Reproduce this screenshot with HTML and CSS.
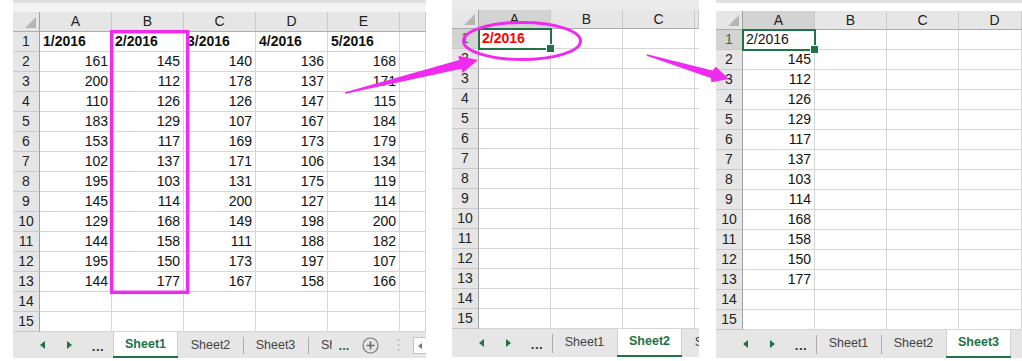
FILE: index.html
```html
<!DOCTYPE html>
<html lang="en">
<head>
<meta charset="UTF-8">
<title>Sheet copy</title>
<link rel="stylesheet" href="styles.css">
</head>
<body>

<section class="sheet sheet-one">
    <div class="sheet-top"></div>
    <div class="row head"><span class="corner"></span><span>A</span><span>B</span><span>C</span><span>D</span><span>E</span><span></span></div>
    <div class="row"><span class="rh">1</span><span class="t b">1/2016</span><span class="t b">2/2016</span><span class="t b">3/2016</span><span class="t b">4/2016</span><span class="t b">5/2016</span><span></span></div>
    <div class="row"><span class="rh">2</span><span>161</span><span>145</span><span>140</span><span>136</span><span>168</span><span></span></div>
    <div class="row"><span class="rh">3</span><span>200</span><span>112</span><span>178</span><span>137</span><span>171</span><span></span></div>
    <div class="row"><span class="rh">4</span><span>110</span><span>126</span><span>126</span><span>147</span><span>115</span><span></span></div>
    <div class="row"><span class="rh">5</span><span>183</span><span>129</span><span>107</span><span>167</span><span>184</span><span></span></div>
    <div class="row"><span class="rh">6</span><span>153</span><span>117</span><span>169</span><span>173</span><span>179</span><span></span></div>
    <div class="row"><span class="rh">7</span><span>102</span><span>137</span><span>171</span><span>106</span><span>134</span><span></span></div>
    <div class="row"><span class="rh">8</span><span>195</span><span>103</span><span>131</span><span>175</span><span>119</span><span></span></div>
    <div class="row"><span class="rh">9</span><span>145</span><span>114</span><span>200</span><span>127</span><span>114</span><span></span></div>
    <div class="row"><span class="rh">10</span><span>129</span><span>168</span><span>149</span><span>198</span><span>200</span><span></span></div>
    <div class="row"><span class="rh">11</span><span>144</span><span>158</span><span>111</span><span>188</span><span>182</span><span></span></div>
    <div class="row"><span class="rh">12</span><span>195</span><span>150</span><span>173</span><span>197</span><span>107</span><span></span></div>
    <div class="row"><span class="rh">13</span><span>144</span><span>177</span><span>167</span><span>158</span><span>166</span><span></span></div>
    <div class="row"><span class="rh">14</span><span></span><span></span><span></span><span></span><span></span><span></span></div>
    <div class="row"><span class="rh">15</span><span></span><span></span><span></span><span></span><span></span><span></span></div>
    <div class="tabs">
        <div class="tab-nav"><span></span><span class="arr left"></span><span class="arr right"></span><span class="dots">...</span></div>
        <div class="tab on">Sheet1</div>
        <div class="tab">Sheet2</div>
        <div class="tab">Sheet3</div>
        <div class="tab cut">Sheet4</div>
        <div class="more">...</div>
        <div class="add">
            <svg width="17" height="17" viewBox="0 0 17 17"><circle cx="8.5" cy="8.5" r="7.5" fill="none" stroke="#7a7a7a" stroke-width="1.2"/><path d="M8.5 4.5v8M4.5 8.5h8" stroke="#6a6a6a" stroke-width="1.6"/></svg>
        </div>
        <div class="vdots">
            <svg width="3" height="14" viewBox="0 0 3 14"><circle cx="1.5" cy="2" r="1" fill="#b5b5b5"/><circle cx="1.5" cy="7" r="1" fill="#b5b5b5"/><circle cx="1.5" cy="12" r="1" fill="#b5b5b5"/></svg>
        </div>
        <div class="hscroll"><span class="arr back"></span></div>
    </div>
</section>

<section class="sheet sheet-two">
    <div class="sheet-top"></div>
    <div class="row head"><span class="corner"></span><span class="on">A</span><span>B</span><span>C</span><span></span></div>
    <div class="row"><span class="rh on">1</span><span class="t sel red">2/2016</span><span></span><span></span><span></span></div>
    <div class="row"><span class="rh">2</span><span></span><span></span><span></span><span></span></div>
    <div class="row"><span class="rh">3</span><span></span><span></span><span></span><span></span></div>
    <div class="row"><span class="rh">4</span><span></span><span></span><span></span><span></span></div>
    <div class="row"><span class="rh">5</span><span></span><span></span><span></span><span></span></div>
    <div class="row"><span class="rh">6</span><span></span><span></span><span></span><span></span></div>
    <div class="row"><span class="rh">7</span><span></span><span></span><span></span><span></span></div>
    <div class="row"><span class="rh">8</span><span></span><span></span><span></span><span></span></div>
    <div class="row"><span class="rh">9</span><span></span><span></span><span></span><span></span></div>
    <div class="row"><span class="rh">10</span><span></span><span></span><span></span><span></span></div>
    <div class="row"><span class="rh">11</span><span></span><span></span><span></span><span></span></div>
    <div class="row"><span class="rh">12</span><span></span><span></span><span></span><span></span></div>
    <div class="row"><span class="rh">13</span><span></span><span></span><span></span><span></span></div>
    <div class="row"><span class="rh">14</span><span></span><span></span><span></span><span></span></div>
    <div class="row"><span class="rh">15</span><span></span><span></span><span></span><span></span></div>
    <div class="tabs">
        <div class="tab-nav"><span></span><span class="arr left"></span><span class="arr right"></span><span class="dots">...</span></div>
        <div class="tab">Sheet1</div>
        <div class="tab on">Sheet2</div>
        <div class="tab">Sheet3</div>
    </div>
</section>

<section class="sheet sheet-three">
    <div class="sheet-top"></div>
    <div class="row head"><span class="corner"></span><span class="on">A</span><span>B</span><span>C</span><span class="last">D</span></div>
    <div class="row"><span class="rh on">1</span><span class="t sel">2/2016</span><span></span><span></span><span></span></div>
    <div class="row"><span class="rh">2</span><span>145</span><span></span><span></span><span></span></div>
    <div class="row"><span class="rh">3</span><span>112</span><span></span><span></span><span></span></div>
    <div class="row"><span class="rh">4</span><span>126</span><span></span><span></span><span></span></div>
    <div class="row"><span class="rh">5</span><span>129</span><span></span><span></span><span></span></div>
    <div class="row"><span class="rh">6</span><span>117</span><span></span><span></span><span></span></div>
    <div class="row"><span class="rh">7</span><span>137</span><span></span><span></span><span></span></div>
    <div class="row"><span class="rh">8</span><span>103</span><span></span><span></span><span></span></div>
    <div class="row"><span class="rh">9</span><span>114</span><span></span><span></span><span></span></div>
    <div class="row"><span class="rh">10</span><span>168</span><span></span><span></span><span></span></div>
    <div class="row"><span class="rh">11</span><span>158</span><span></span><span></span><span></span></div>
    <div class="row"><span class="rh">12</span><span>150</span><span></span><span></span><span></span></div>
    <div class="row"><span class="rh">13</span><span>177</span><span></span><span></span><span></span></div>
    <div class="row"><span class="rh">14</span><span></span><span></span><span></span><span></span></div>
    <div class="row"><span class="rh">15</span><span></span><span></span><span></span><span></span></div>
    <div class="tabs">
        <div class="tab-nav"><span></span><span class="arr left"></span><span class="arr right"></span><span class="dots">...</span></div>
        <div class="tab">Sheet1</div>
        <div class="tab">Sheet2</div>
        <div class="tab on">Sheet3</div>
    </div>
</section>

<!-- magenta marks drawn over the screenshots -->
<svg class="marks" width="1022" height="361" viewBox="0 0 1022 361">
    <rect x="111.7" y="31.7" width="76" height="260.6" fill="none" stroke="#ef2bef" stroke-width="3.5"/>
    <ellipse cx="522" cy="41" rx="58.5" ry="18.5" fill="none" stroke="#ef2bef" stroke-width="3"/>
    <polygon points="345,92.3 459.4,60 458.3,55.7 478,60 462.7,73.1 461.6,68.8 345.5,93.7" fill="#ef2bef"/>
    <polygon points="647,54.3 712.6,70.6 716,66.8 729,79 711.4,82.2 710.8,78 646.8,55.7" fill="#ef2bef"/>
</svg>

</body>
</html>
```

FILE: styles.css
```css
* {
    box-sizing: border-box;
}

body {
    margin: 0;
    width: 1022px;
    height: 361px;
    overflow: hidden;
    position: relative;
    background-color: #fff;
    display: flex;
    align-items: flex-start;
    font-family: "Liberation Sans", Arial, sans-serif;
    color: #111;
}

.sheet {
    flex: none;
    overflow: hidden;
}

.sheet-one {
    width: 413px;
    margin-left: 13px;
}

.sheet-two {
    width: 247px;
    margin-left: 26px;
}

.sheet-three {
    width: 306px;
    margin-left: 17px;
}

.sheet-top {
    height: 12px;
    background-color: #f3f3f3;
    border-top: 3px solid #e0e0e0;
}

.sheet-two .sheet-top {
    height: 10px;
    background-color: #ebebeb;
    border-top: none;
}

.sheet-three .sheet-top {
    height: 11px;
    background-color: #fff;
}

/* grid rows */
.row {
    display: grid;
    height: 20px;
}

.sheet-one .row {
    grid-template-columns: 27px repeat(5, 72px) 26px;
}

.sheet-two .row {
    grid-template-columns: 27px repeat(3, 72px) 4px;
}

.sheet-three .row {
    grid-template-columns: 27px repeat(3, 72px) 63px;
}

.sheet-two .row.head,
.sheet-three .row.head {
    height: 19px;
}

.row > span {
    border-right: 1px solid #d6d6d6;
    border-bottom: 1px solid #d6d6d6;
    font-size: 14px;
    line-height: 19px;
    padding: 0 3px;
    text-align: right;
    white-space: nowrap;
}

.row > .t {
    text-align: left;
}

.row > .b {
    font-weight: bold;
}

.row.head > span {
    background-color: #e6e6e6;
    border-right-color: #c9c9c9;
    border-bottom-color: #acacac;
    text-align: center;
    color: #222;
    padding: 0;
}

.sheet-two .row.head > span,
.sheet-three .row.head > span {
    line-height: 18px;
}

.row.head > .last {
    padding-left: 9px;
}

.row > .rh {
    background-color: #e6e6e6;
    border-right-color: #a0a0a0;
    border-bottom-color: #c9c9c9;
    text-align: center;
    color: #222;
    padding: 0;
}

.row > .on {
    background-color: #d3d3d3;
    color: #217346;
}

.row.head > .on {
    background-color: #d3d3d3;
}

.row.head > .corner {
    position: relative;
    border-right-color: #a0a0a0;
}

.corner::after {
    content: "";
    position: absolute;
    right: 3px;
    bottom: 3px;
    border-left: 11px solid transparent;
    border-bottom: 11px solid #b6b6b6;
}

.sel {
    position: relative;
}

.sel::before {
    content: "";
    position: absolute;
    left: -1px;
    top: -1px;
    right: -2px;
    bottom: -2px;
    border: 2px solid #217346;
}

.sel::after {
    content: "";
    position: absolute;
    right: -5px;
    bottom: -5px;
    width: 7px;
    height: 7px;
    background-color: #217346;
    border: 1px solid #fff;
}

.row > .red {
    color: #f00;
    font-weight: bold;
}

/* sheet tabs */
.tabs {
    display: flex;
    height: 26px;
    background-color: #e6e6e6;
    font-size: 12.5px;
    color: #444;
}

.sheet-two .tabs {
    height: 28px;
}

.sheet-three .tabs {
    height: 28px;
}

.tab-nav {
    flex: none;
    width: 100px;
    display: grid;
    grid-template-columns: 16px 26px 28px 30px;
    align-items: center;
    justify-items: center;
}

.arr {
    width: 0;
    height: 0;
    border-top: 4px solid transparent;
    border-bottom: 4px solid transparent;
}

.arr.left {
    border-right: 5px solid #217346;
}

.arr.right {
    border-left: 5px solid #217346;
}

.dots {
    font-size: 13px;
    font-weight: bold;
    color: #333;
    letter-spacing: 0.5px;
    padding-top: 2px;
}

.tab {
    flex: none;
    width: 65px;
    position: relative;
    text-align: center;
    line-height: 26px;
}

.tab::before {
    content: "";
    position: absolute;
    left: 0;
    top: 5px;
    bottom: 4px;
    width: 1px;
    background-color: #ababab;
}

.tab.on::before,
.tab.on + .tab::before {
    display: none;
}

.tab.on {
    background-color: #fff;
    color: #217346;
    font-weight: bold;
    border-bottom: 2px solid #217346;
    box-shadow: inset 1px 0 #d0d0d0, inset -1px 0 #d0d0d0;
    line-height: 25px;
}

.tab.cut {
    width: 24px;
    overflow: hidden;
    text-align: left;
    padding-left: 13px;
}

.more {
    flex: none;
    width: 24px;
    text-align: center;
    color: #217346;
    font-weight: bold;
    font-size: 13px;
    line-height: 28px;
}

.add,
.vdots {
    flex: none;
    display: flex;
    align-items: center;
    justify-content: center;
}

.add {
    width: 28px;
}

.vdots {
    width: 29px;
}

.hscroll {
    flex: none;
    width: 13px;
    margin: 5px 0 4px;
    background-color: #fff;
    border: 1px solid #c4c4c4;
    border-right: none;
    display: flex;
    align-items: center;
    justify-content: center;
}

.arr.back {
    border-top-width: 3px;
    border-bottom-width: 3px;
    border-right: 4px solid #777;
}

.marks {
    position: absolute;
    left: 0;
    top: 0;
    pointer-events: none;
}
```
